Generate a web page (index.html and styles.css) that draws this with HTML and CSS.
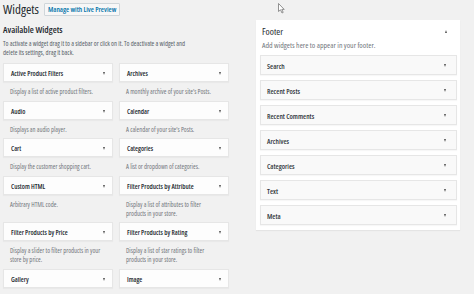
FILE: index.html
```html
<!doctype html>
<html lang="en">
<head>
    <meta charset="UTF-8">
    <title>Widgets</title>
    <link rel="stylesheet" href="styles.css">
</head>
<body>
<div class="top">
    <h1 class="title">Widgets</h1>
    <a class="btn" href="#">Manage with Live Preview</a>
</div>
<div class="main">
    <div class="avail">
        <h2>Available Widgets</h2>
        <p class="intro">To activate a widget drag it to a sidebar or click on it. To deactivate a widget and<br>delete its settings, drag it back.</p>
        <div class="grid">
            <div class="item"><div class="card">Active Product Filters<i class="down"></i></div><p class="desc">Display a list of active product filters.</p></div>
            <div class="item"><div class="card">Archives<i class="down"></i></div><p class="desc">A monthly archive of your site’s Posts.</p></div>
            <div class="item"><div class="card">Audio<i class="down"></i></div><p class="desc">Displays an audio player.</p></div>
            <div class="item"><div class="card">Calendar<i class="down"></i></div><p class="desc">A calendar of your site’s Posts.</p></div>
            <div class="item"><div class="card">Cart<i class="down"></i></div><p class="desc">Display the customer shopping cart.</p></div>
            <div class="item"><div class="card">Categories<i class="down"></i></div><p class="desc">A list or dropdown of categories.</p></div>
            <div class="item"><div class="card">Custom HTML<i class="down"></i></div><p class="desc">Arbitrary HTML code.</p></div>
            <div class="item"><div class="card">Filter Products by Attribute<i class="down"></i></div><p class="desc">Display a list of attributes to filter<br>products in your store.</p></div>
            <div class="item"><div class="card">Filter Products by Price<i class="down"></i></div><p class="desc">Display a slider to filter products in your<br>store by price.</p></div>
            <div class="item"><div class="card">Filter Products by Rating<i class="down"></i></div><p class="desc">Display a list of star ratings to filter<br>products in your store.</p></div>
            <div class="item"><div class="card">Gallery<i class="down"></i></div></div>
            <div class="item"><div class="card">Image<i class="down"></i></div></div>
        </div>
    </div>
    <div class="panel">
        <div class="panel-head">Footer<i class="up"></i></div>
        <p class="panel-desc">Add widgets here to appear in your footer.</p>
        <div class="slot">Search<i class="down"></i></div>
        <div class="slot">Recent Posts<i class="down"></i></div>
        <div class="slot">Recent Comments<i class="down"></i></div>
        <div class="slot">Archives<i class="down"></i></div>
        <div class="slot">Categories<i class="down"></i></div>
        <div class="slot">Text<i class="down"></i></div>
        <div class="slot">Meta<i class="down"></i></div>
    </div>
</div>
<svg class="cursor" width="7" height="11" viewBox="0 0 7 11"><path d="M0.5 0.5 L0.5 8.5 L2.5 6.8 L4 10 L5.2 9.4 L3.8 6.4 L6.2 6.4 Z" fill="#fff" stroke="#777" stroke-width="0.8"/></svg>
</body>
</html>
```

FILE: styles.css
```css
body{
    margin: 0;
    background: #f1f1f1;
    color: #23282d;
    font-family: "Open Sans", "Noto Sans", sans-serif;
    font-stretch: 80%;
    width: 474px;
    height: 294px;
    overflow: hidden;
}
.top{
    display: flex;
    align-items: center;
    gap: 5px;
    height: 17px;
    padding: 1px 3px 0;
}
.title{
    margin: 0;
    font-size: 13px;
    font-weight: 400;
    line-height: 15px;
    color: #23282d;
}
.btn{
    display: block;
    padding: 0 3px;
    height: 11px;
    line-height: 11px;
    font-size: 7.2px;
    font-weight: 600;
    color: #0073aa;
    text-decoration: none;
    background: #f7f7f7;
    border: 1px solid #d0d6da;
    border-radius: 1px;
}
.main{
    display: flex;
    padding: 0 3px;
}
.avail{
    width: 228px;
    padding-top: 7px;
}
.avail h2{
    margin: 0;
    font-size: 9.2px;
    line-height: 10px;
    font-weight: 600;
}
.intro{
    margin: 4px 0 6px;
    font-size: 6.7px;
    line-height: 9px;
    color: #555d66;
}
.grid{
    display: grid;
    grid-template-columns: 110px 110px;
    column-gap: 6px;
    align-items: start;
}
.card, .slot{
    position: relative;
    height: 19px;
    line-height: 19px;
    padding-left: 7px;
    font-size: 6.8px;
    font-weight: 600;
    background: #fdfdfd;
    border: 1px solid #e6e6e6;
    box-sizing: border-box;
    box-shadow: 0 1px 1px rgba(0,0,0,.03);
}
.desc{
    margin: 0;
    padding: 5px 7px 4.5px;
    font-size: 6.6px;
    line-height: 9px;
    color: #72777c;
}
.down, .up{
    position: absolute;
    right: 7px;
    top: 8px;
    width: 0;
    height: 0;
    border-left: 1.5px solid transparent;
    border-right: 1.5px solid transparent;
    border-top: 3px solid #555;
}
.up{
    border-top: 0;
    border-bottom: 3px solid #555;
}
.panel{
    position: relative;
    margin: 2px 0 0 25px;
    width: 204px;
    height: 210px;
    box-sizing: border-box;
    padding: 6px 3px 5px 4px;
    background: #fff;
    box-shadow: 0 1px 1px rgba(0,0,0,.05);
}
.panel-head{
    position: relative;
    padding-left: 2px;
    font-size: 9.5px;
    line-height: 12px;
}
.panel-head .up{
    right: 10px;
    top: 4px;
}
.panel-desc{
    margin: 2.5px 0 5.5px;
    padding-left: 2px;
    font-size: 7.8px;
    line-height: 9px;
    color: #72777c;
}
.slot{
    height: 20px;
    line-height: 20px;
    margin-bottom: 5px;
    padding-left: 6px;
    background: #f9f9f9;
    font-size: 7.2px;
    color: #32373c;
}
.slot .down{
    right: 10px;
}
.cursor{
    position: absolute;
    left: 278px;
    top: 3px;
}
```
